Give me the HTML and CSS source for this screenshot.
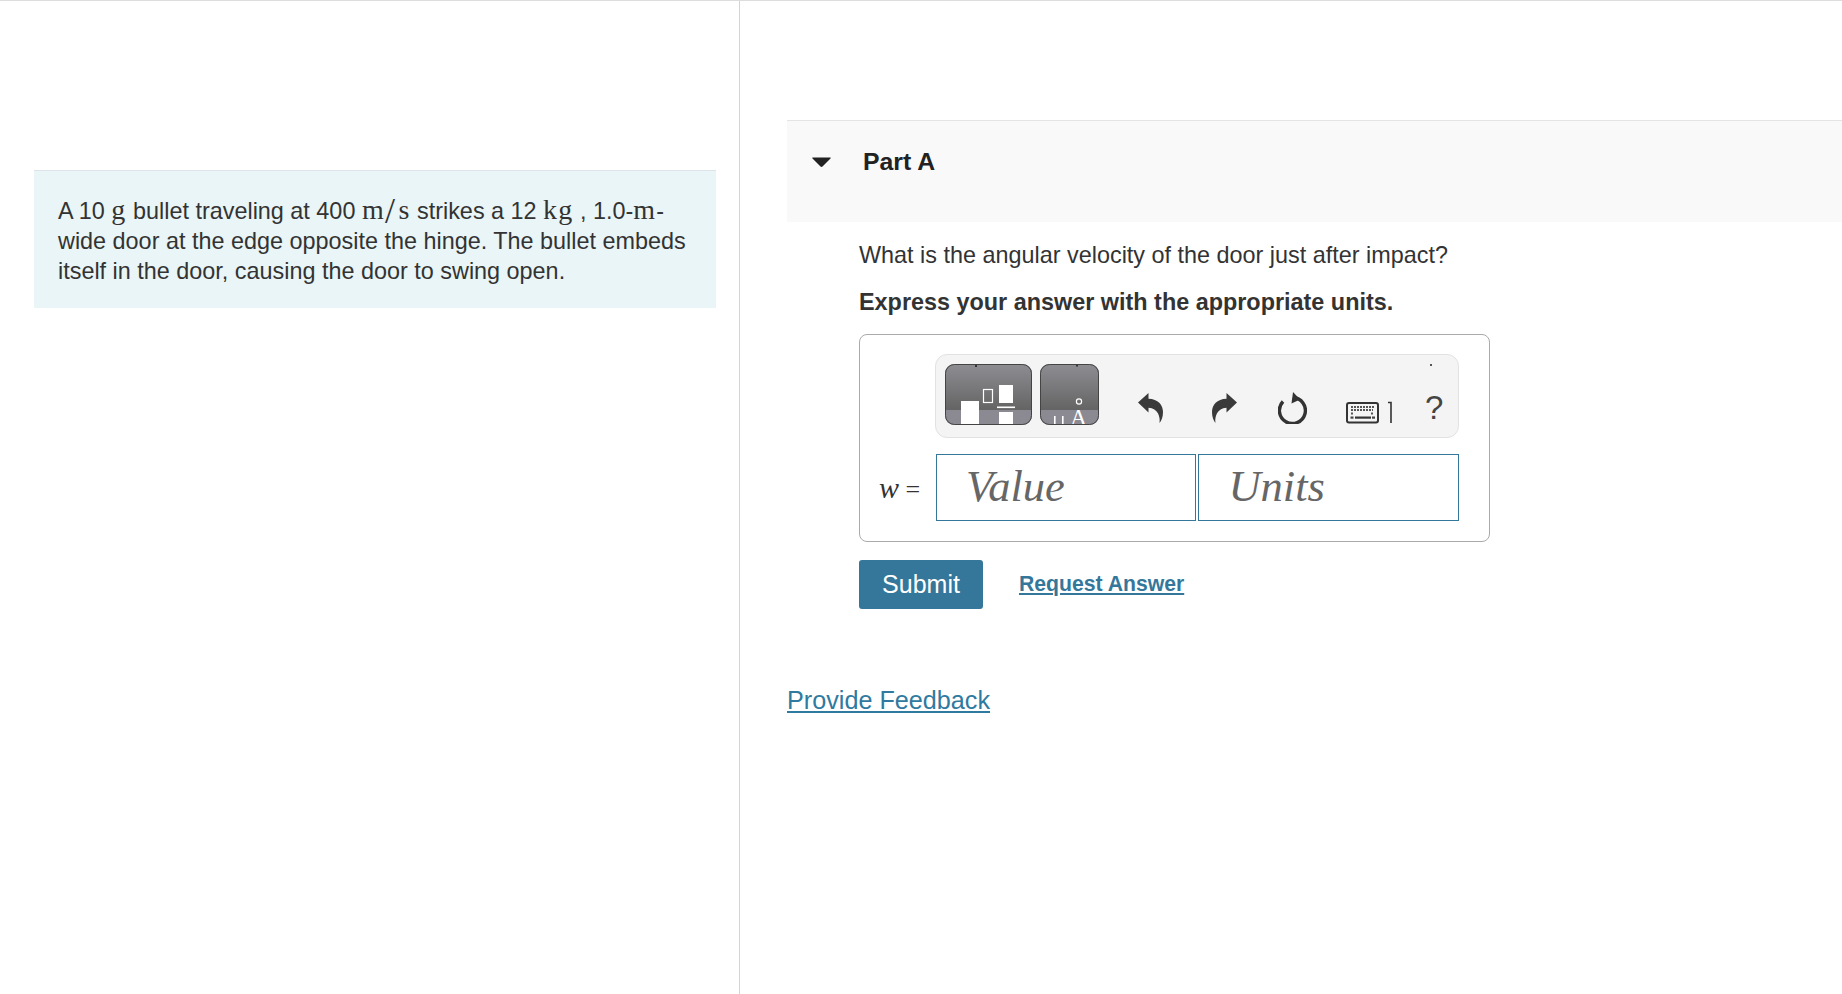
FILE: index.html
```html
<!DOCTYPE html>
<html>

<head>
  <title>Part A</title>
  <link rel="stylesheet" href="styles.css">
</head>

<body>
  <main class="page">
    <aside class="intro-pane">
      <p class="intro">
        A 10 <span class="math">g</span> bullet traveling at 400 <span class="math">m<span class="slash">/</span>s</span> strikes a 12 <span class="math">kg</span> , 1.0-<span class="math">m</span>-
        wide door at the edge opposite the hinge. The bullet embeds
        itself in the door, causing the door to swing open.
      </p>
    </aside>

    <section class="work-pane">
      <header class="part-head">
        <svg class="caret" width="19" height="10" viewBox="0 0 19 10">
          <path d="M0.5 0.5 H18.5 Q19 1 18 2 L10.5 9.5 Q9.5 10.3 8.5 9.5 L1 2 Q0 1 0.5 0.5 Z" fill="#222" />
        </svg>
        <h2 class="part-title">Part A</h2>
      </header>

      <div class="part-body">
        <p class="question">What is the angular velocity of the door just after impact?</p>
        <p class="instruction">Express your answer with the appropriate units.</p>

        <div class="answer-box">
          <div class="toolbar">
            <!-- templates button -->
            <svg class="tpl-btn" width="87" height="61" viewBox="0 0 87 61">
              <defs>
                <linearGradient id="btnFill" x1="0" y1="0" x2="0" y2="1">
                  <stop offset="0" stop-color="#8e8d92" />
                  <stop offset="1" stop-color="#646464" />
                </linearGradient>
                <clipPath id="clipOne"><rect width="87" height="61" rx="9" /></clipPath>
                <clipPath id="clipTwo"><rect width="59" height="61" rx="9" /></clipPath>
              </defs>
              <g clip-path="url(#clipOne)">
                <rect width="87" height="46" fill="url(#btnFill)" />
                <rect y="46" width="87" height="15" fill="#8b8a92" />
                <rect x="16" y="37" width="18" height="24" fill="#fff" />
                <rect x="38.5" y="25.5" width="9" height="13" fill="none" stroke="#fff" stroke-width="1.2" />
                <rect x="54" y="21" width="14" height="18" fill="#fff" />
                <rect x="52" y="42.5" width="18" height="1.6" fill="#fff" />
                <rect x="54" y="48" width="14" height="13" fill="#fff" />
                <rect x="30" y="1" width="2" height="2" fill="#333" />
              </g>
              <rect x="0.5" y="0.5" width="86" height="60" rx="9" fill="none" stroke="#444" />
            </svg>
            <!-- symbols button -->
            <svg class="tpl-btn sym-btn" width="59" height="61" viewBox="0 0 59 61">
              <g clip-path="url(#clipTwo)">
                <rect width="59" height="46" fill="url(#btnFill)" />
                <rect y="46" width="59" height="15" fill="#8b8a92" />
                <rect x="14" y="52" width="1.6" height="9" fill="#fff" />
                <rect x="22" y="52" width="1.6" height="9" fill="#fff" />
                <circle cx="39" cy="37.5" r="2.6" fill="none" stroke="#fff" stroke-width="1.2" />
                <rect x="36" y="1" width="2" height="1.5" fill="#333" />
              </g>
              <text class="glyph" x="38.5" y="61" text-anchor="middle">A</text>
              <rect x="0.5" y="0.5" width="58" height="60" rx="9" fill="none" stroke="#444" />
            </svg>

            <div class="tools">
              <svg class="undo" width="25" height="32" viewBox="0 0 25 32">
                <path d="M0 10.5 L10.5 1 V6.8 C20 7 25 13 25 20 C25 25 23.5 28.5 21.5 31 C22.5 25 20 16.5 10.5 15.8 V20.5 Z" fill="#3a3a3a" />
              </svg>
              <svg class="redo" width="25" height="32" viewBox="0 0 25 32">
                <path d="M25 10.5 L14.5 1 V6.8 C5 7 0 13 0 20 C0 25 1.5 28.5 3.5 31 C2.5 25 5 16.5 14.5 15.8 V20.5 Z" fill="#3a3a3a" />
              </svg>
              <svg class="reset" width="29" height="32" viewBox="0 0 29 32">
                <path d="M15 5.5 A13 13 0 1 1 5 9.5" fill="none" stroke="#333" stroke-width="3.4" />
                <path d="M15 0 L22 7.5 L13.5 11.5 Z" fill="#333" />
              </svg>
              <svg class="keys" width="33" height="32" viewBox="0 0 33 32">
                <rect x="1" y="11" width="31" height="19.5" rx="2" fill="none" stroke="#333" stroke-width="2" />
                <path d="M5 15 H28 M5 18 H27 M5 21.5 H8 M25 21.5 H28" stroke="#555" stroke-width="1.8" stroke-dasharray="2 1" fill="none" />
                <rect x="9" y="24.5" width="16" height="2.2" fill="#333" />
                <rect x="4.5" y="24.5" width="3" height="2.2" fill="#444" />
                <rect x="26" y="24.5" width="3" height="2.2" fill="#444" />
              </svg>
              <svg class="bracket" width="4" height="32" viewBox="0 0 4 32">
                <path d="M0 10.5 H3 V31" fill="none" stroke="#333" stroke-width="1.6" />
              </svg>
              <span class="help">?</span>
            </div>
            <span class="speck"></span>
          </div>

          <div class="entry-row">
            <span class="var-label"><i class="var-name">w</i> =</span>
            <div class="field">Value</div>
            <div class="field">Units</div>
          </div>
        </div>

        <div class="actions">
          <button class="submit" type="button">Submit</button>
          <a class="request" href="#">Request Answer</a>
        </div>
      </div>

      <a class="feedback" href="#">Provide Feedback</a>
    </section>
  </main>
</body>

</html>
```

FILE: styles.css
```css
html,
body {
  margin: 0;
  height: 100%;
  background-color: #fff;
}

body {
  overflow: hidden;
  font-family: "Liberation Sans", Arial, sans-serif;
  color: #333;
}

p,
h2 {
  margin: 0;
}

.page {
  display: flex;
  height: 100%;
  box-sizing: border-box;
  border-top: 1px solid #ddd;
}

/* left column with the problem text */
.intro-pane {
  box-sizing: border-box;
  width: 740px;
  padding: 169px 23px 0 34px;
  border-right: 1px solid #d4d4d8;
}

.intro {
  box-sizing: border-box;
  height: 138px;
  padding: 25px 24px 0;
  border-top: 1px solid #dde3e8;
  background-color: #e9f5f7;
  font-size: 23.4px;
  line-height: 30px;
}

.math {
  font-family: "Liberation Serif", serif;
  font-size: 28px;
  line-height: 20px;
  letter-spacing: 1.2px;
}

.slash {
  font-size: 36px;
  font-weight: normal;
  vertical-align: -4px;
  letter-spacing: 3.5px;
}

/* right column */
.work-pane {
  flex: 1;
  padding: 119px 0 0 47px;
}

.part-head {
  display: flex;
  align-items: center;
  box-sizing: border-box;
  height: 102px;
  padding: 0 0 19px 25px;
  border-top: 1px solid #e4e4e4;
  background-color: #f9f9f9;
}

.part-title {
  margin-left: 32px;
  font-size: 24.8px;
  color: #222;
}

.part-body {
  width: 631px;
  padding: 21px 0 0 72px;
}

.question {
  font-size: 23.4px;
  line-height: 24px;
}

.instruction {
  margin-top: 22px;
  font-size: 23.4px;
  line-height: 26px;
  font-weight: bold;
}

.answer-box {
  box-sizing: border-box;
  height: 208px;
  margin-top: 19px;
  padding: 19px 30px 0 75px;
  border: 1px solid #aaa;
  border-radius: 8px;
}

.toolbar {
  position: relative;
  display: flex;
  box-sizing: border-box;
  height: 84px;
  padding: 9px 9px 0;
  border: 1px solid #e2e2e2;
  border-radius: 12px;
  background-color: #f4f4f4;
}

.tpl-btn {
  display: block;
  margin-right: 8px;
}

.sym-btn {
  overflow: visible;
}

.glyph {
  font-family: "Liberation Serif", serif;
  font-size: 23px;
  fill: #fff;
}

.tools {
  display: flex;
  height: 32px;
  margin-top: 28px;
  margin-left: 31px;
}

.tools svg {
  display: block;
}

.redo {
  margin-left: 49px;
}

.reset {
  margin-left: 41px;
}

.keys {
  margin-left: 39px;
}

.bracket {
  margin-left: 9px;
}

.help {
  margin-left: 33px;
  font-size: 33px;
  line-height: 32px;
  color: #444;
}

/* tiny mark in the toolbar corner */
.speck {
  position: absolute;
  top: 9px;
  right: 26px;
  width: 2px;
  height: 2px;
  background-color: #555;
}

.entry-row {
  display: flex;
  align-items: stretch;
  height: 67px;
  margin-top: 16px;
  margin-left: -75px;
  padding-left: 19px;
}

.var-label {
  width: 57px;
  font-family: "Liberation Serif", serif;
  font-size: 26px;
  line-height: 68px;
}

.var-name {
  font-size: 30px;
}

.field {
  box-sizing: border-box;
  width: 261px;
  padding-left: 29px;
  border: 1px solid #35779a;
  font-family: "Liberation Serif", serif;
  font-style: italic;
  font-size: 44.5px;
  line-height: 63px;
  color: #666;
}

.field + .field {
  margin-left: 2px;
}

.actions {
  display: flex;
  align-items: center;
  margin-top: 18px;
}

.submit {
  width: 124px;
  height: 49px;
  padding: 0;
  border: 0;
  border-radius: 3px;
  background-color: #35779a;
  font-family: "Liberation Sans", Arial, sans-serif;
  font-size: 25px;
  color: #fff;
}

.request {
  margin-left: 36px;
  margin-bottom: 2px;
  font-size: 21.2px;
  font-weight: bold;
  color: #35779a;
}

.feedback {
  display: inline-block;
  margin-top: 77px;
  font-size: 25.2px;
  color: #2f7a9f;
}
```
